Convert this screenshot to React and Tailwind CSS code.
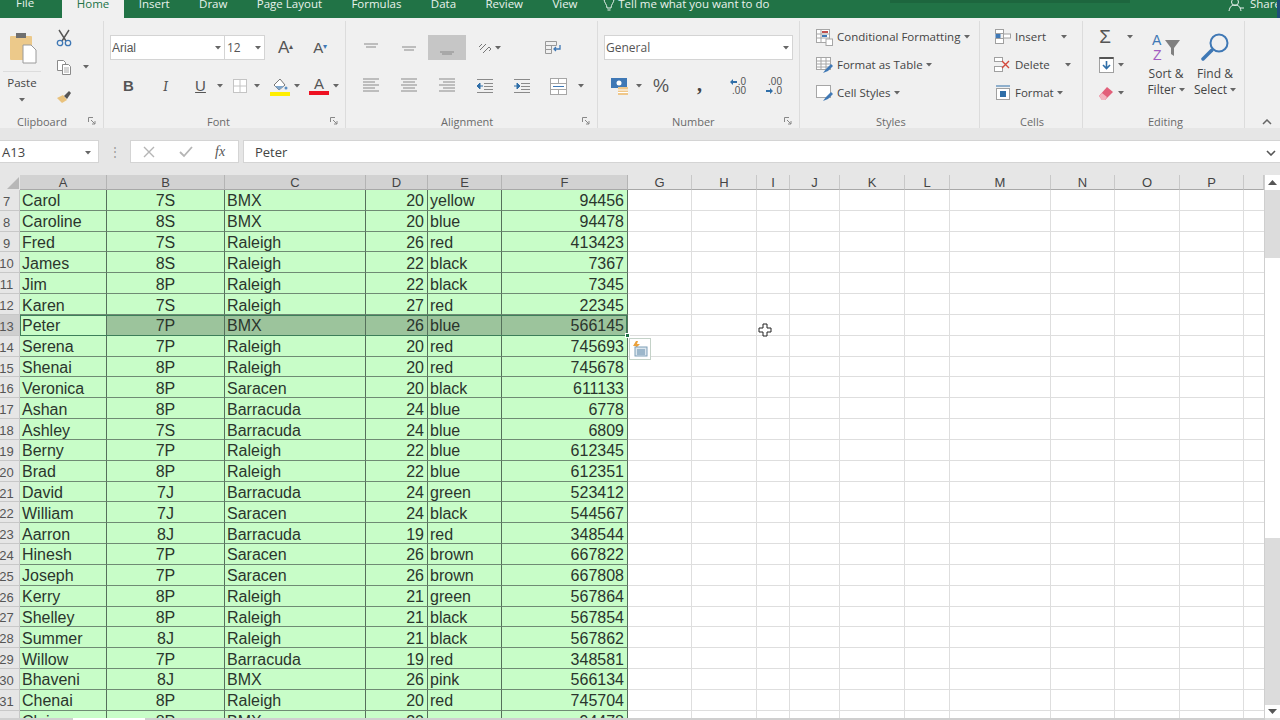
import React from 'react'

const ui = "font-['Open_Sans',sans-serif]"
const cols = 'grid grid-cols-[20px_87px_118px_141px_62px_74px_126px_64px_65px_33px_50px_65px_45px_101px_64px_65px_64px_20px]'

const letters = ['A', 'B', 'C', 'D', 'E', 'F', 'G', 'H', 'I', 'J', 'K', 'L', 'M', 'N', 'O', 'P', '']

const rows = [
  [7, 'Carol', '7S', 'BMX', 20, 'yellow', 94456],
  [8, 'Caroline', '8S', 'BMX', 20, 'blue', 94478],
  [9, 'Fred', '7S', 'Raleigh', 26, 'red', 413423],
  [10, 'James', '8S', 'Raleigh', 22, 'black', 7367],
  [11, 'Jim', '8P', 'Raleigh', 22, 'black', 7345],
  [12, 'Karen', '7S', 'Raleigh', 27, 'red', 22345],
  [13, 'Peter', '7P', 'BMX', 26, 'blue', 566145],
  [14, 'Serena', '7P', 'Raleigh', 20, 'red', 745693],
  [15, 'Shenai', '8P', 'Raleigh', 20, 'red', 745678],
  [16, 'Veronica', '8P', 'Saracen', 20, 'black', 611133],
  [17, 'Ashan', '8P', 'Barracuda', 24, 'blue', 6778],
  [18, 'Ashley', '7S', 'Barracuda', 24, 'blue', 6809],
  [19, 'Berny', '7P', 'Raleigh', 22, 'blue', 612345],
  [20, 'Brad', '8P', 'Raleigh', 22, 'blue', 612351],
  [21, 'David', '7J', 'Barracuda', 24, 'green', 523412],
  [22, 'William', '7J', 'Saracen', 24, 'black', 544567],
  [23, 'Aarron', '8J', 'Barracuda', 19, 'red', 348544],
  [24, 'Hinesh', '7P', 'Saracen', 26, 'brown', 667822],
  [25, 'Joseph', '7P', 'Saracen', 26, 'brown', 667808],
  [26, 'Kerry', '8P', 'Raleigh', 21, 'green', 567864],
  [27, 'Shelley', '8P', 'Raleigh', 21, 'black', 567854],
  [28, 'Summer', '8J', 'Raleigh', 21, 'black', 567862],
  [29, 'Willow', '7P', 'Barracuda', 19, 'red', 348581],
  [30, 'Bhaveni', '8J', 'BMX', 26, 'pink', 566134],
  [31, 'Chenai', '8P', 'Raleigh', 20, 'red', 745704],
  [32, 'Claire', '8P', 'BMX', 20, '', 94478],
]

const Caret = ({ className = '' }) => (
  <svg width="6" height="4" viewBox="0 0 6 4" className={className}><path d="M0 0h6L3 3.5z" fill="#666" /></svg>
)

const Launcher = () => (
  <svg width="8" height="8" viewBox="0 0 8 8" className="ml-auto mr-[7px]" fill="none" stroke="#888">
    <path d="M.5 5V.5H5" /><path d="M3 3l4 4M7 4v3H4" />
  </svg>
)

const Group = ({ w, label, labelMl, launcher, children }) => (
  <div className={`${w} shrink-0 flex flex-col border-r border-[#dcdcdc] mt-[3px]`}>
    <div className="flex-1 min-h-0">{children}</div>
    <div className="h-[14px] flex items-center">
      <span className={`${labelMl} text-[11px] leading-none text-[#6a6a6a]`}>{label}</span>
      {launcher && <Launcher />}
    </div>
  </div>
)

const Slot = ({ w = 'w-[37px]', children }) => (
  <div className={`${w} h-[26px] shrink-0 flex items-center justify-center`}>{children}</div>
)

const Lines = ({ y, w = 18 }) => (
  <svg width={w} height="18" viewBox="0 0 18 18" stroke="#8a8a8a">
    {y.map((p, i) => <path key={i} d={`M${p[0]} ${p[1]}H${p[2]}`} />)}
  </svg>
)

const Paste = () => (
  <svg width="30" height="32" viewBox="0 0 30 32" className="ml-[4px]">
    <rect x="1" y="4" width="22" height="24" rx="1" fill="#ecc98a" />
    <rect x="7" y="1" width="10" height="5" fill="#6f6f6f" />
    <path d="M14 13h8l5 5v13H14z" fill="#fff" stroke="#9a9a9a" />
  </svg>
)

const Scissors = () => (
  <svg width="16" height="18" viewBox="0 0 16 18" fill="none">
    <path d="M3 1l7 11M13 1L6 12" stroke="#555" strokeWidth="1.4" />
    <circle cx="4" cy="14" r="2.7" stroke="#3f78b5" strokeWidth="1.3" />
    <circle cx="12" cy="14" r="2.7" stroke="#3f78b5" strokeWidth="1.3" />
  </svg>
)

const Copy = () => (
  <svg width="16" height="16" viewBox="0 0 16 16" fill="#fff" stroke="#8a8a8a">
    <path d="M1.5 1.5h6l2 2v8h-8z" /><path d="M6.5 5.5h6l2 2v8h-8z" />
    <path d="M8 9h5M8 11h5M8 13h5" stroke="#aaa" />
  </svg>
)

const Painter = () => (
  <svg width="17" height="15" viewBox="0 0 17 15">
    <path d="M1 9l6-3 4 5-5 3z" fill="#e9c27d" />
    <path d="M8 7l5-5 2 2-4 6z" fill="#555" />
  </svg>
)

const Borders = () => (
  <svg width="16" height="16" viewBox="0 0 16 16" fill="#fff" stroke="#c4c4c4">
    <rect x="1.5" y="1.5" width="13" height="13" /><path d="M8 1.5v13M1.5 8h13" />
  </svg>
)

const Fill = () => (
  <svg width="20" height="19" viewBox="0 0 20 19">
    <path d="M4 8l6-6 5 6-6 5z" fill="#fff" stroke="#777" />
    <path d="M5 9h9l-5 4z" fill="#7fa6cc" />
    <circle cx="16" cy="11" r="1.5" fill="#5a8fc4" />
    <rect x="0" y="15" width="20" height="4" fill="#ffee00" />
  </svg>
)

const Orient = () => (
  <svg width="14" height="14" viewBox="0 0 14 14" fill="none" stroke="#777">
    <path d="M2 9l6-6M1 6l3-3M5 12l6-6M11 6l2 2-2 2" />
  </svg>
)

const Wrap = () => (
  <svg width="18" height="16" viewBox="0 0 18 16" fill="none">
    <path d="M1.5 1.5h11v4h-11zM1.5 5.5h6v4h-6zM1.5 9.5h6v4h-6z" stroke="#999" />
    <path d="M16 5v4h-6M12 7l-2 2 2 2" stroke="#3f78b5" strokeWidth="1.3" />
  </svg>
)

const Indent = ({ flip }) => (
  <svg width="16" height="14" viewBox="0 0 16 14" fill="none">
    <path d="M0 .5h16M7 4.5h9M7 7.5h9M7 10.5h9M0 13.5h16" stroke="#8a8a8a" />
    <path d={flip ? 'M0 7h4M3 4l3 3-3 3z' : 'M6 7H2M3 4L0 7l3 3z'} stroke="#2f6ea8" fill="#2f6ea8" />
  </svg>
)

const Merge = () => (
  <svg width="17" height="17" viewBox="0 0 17 17" fill="#fff" stroke="#a6a6a6">
    <rect x=".5" y=".5" width="16" height="16" /><path d="M.5 5.5h16M.5 11.5h16M8.5.5v5M8.5 11.5v5" />
    <path d="M3 8.5h11" stroke="#3f78b5" />
  </svg>
)

const Money = () => (
  <svg width="18" height="18" viewBox="0 0 18 18">
    <rect x="0" y="1" width="16" height="10" fill="#3f78b5" />
    <circle cx="8" cy="6" r="2.5" fill="#fff" />
    <rect x="7" y="10" width="10" height="8" fill="#efc78a" />
    <path d="M7 13h10M7 15.500h10" stroke="#fff" />
  </svg>
)

const DecArrow = ({ left }) => (
  <svg width="7" height="6" viewBox="0 0 7 6" className="mr-[1px]">
    <path d={left ? 'M0 3l3-3v2h4v2H3v2z' : 'M7 3L4 0v2H0v2h4v2z'} fill="#2f6ea8" />
  </svg>
)

const Decimal = ({ a, b, up }) => (
  <div className="flex flex-col items-end text-[10px] leading-[9px] text-[#555] font-['Liberation_Sans',sans-serif]">
    <span className="flex items-center">{up && <DecArrow left />}{a}</span>
    <span className="flex items-center">{!up && <DecArrow />}{b}</span>
  </div>
)

const CondFmt = () => (
  <svg width="17" height="17" viewBox="0 0 17 17" fill="#fff" stroke="#a6a6a6">
    <rect x=".5" y=".5" width="13" height="13" /><path d="M.5 5h13M.5 9h13M5 .5v13" />
    <rect x="6" y="2" width="6" height="2" fill="#c0504d" stroke="none" />
    <rect x="6" y="6" width="5" height="2" fill="#3f78b5" stroke="none" />
    <rect x="10" y="10" width="6.500" height="6.500" />
  </svg>
)

const FmtTable = () => (
  <svg width="17" height="17" viewBox="0 0 17 17" fill="#fff" stroke="#a6a6a6">
    <rect x=".5" y=".5" width="14" height="12" />
    <path d="M.5 4h14M.5 7h14M.5 10h14M5 .5v12M10 .5v12" />
    <path d="M7 16l3-4 5-5 2 2-5 5z" fill="#3f78b5" stroke="none" />
  </svg>
)

const CellSt = () => (
  <svg width="17" height="17" viewBox="0 0 17 17" fill="#fff" stroke="#a6a6a6">
    <rect x=".5" y=".5" width="14" height="12" />
    <path d="M7 16l3-4 5-5 2 2-5 5z" fill="#3f78b5" stroke="none" />
  </svg>
)

const InsertI = () => (
  <svg width="16" height="16" viewBox="0 0 16 16" fill="#fff" stroke="#a0a0a0">
    <rect x=".5" y=".5" width="8" height="4" /><rect x="8.500" y="5" width="7" height="4" />
    <rect x=".5" y="9.500" width="8" height="5" /><rect x=".5" y="5" width="5" height="4" fill="#3f78b5" stroke="none" />
  </svg>
)

const DeleteI = () => (
  <svg width="17" height="16" viewBox="0 0 17 16" fill="#fff" stroke="#a0a0a0">
    <rect x=".5" y=".5" width="8" height="4" /><rect x=".5" y="9.500" width="8" height="5" />
    <path d="M8 4l7 7M15 4l-7 7" stroke="#d4483b" strokeWidth="1.4" fill="none" />
  </svg>
)

const FormatI = () => (
  <svg width="16" height="17" viewBox="0 0 16 17" fill="#fff" stroke="#a0a0a0">
    <rect x="1.500" y="3.500" width="13" height="11" />
    <rect x="5" y="6" width="6" height="6" fill="#2f6ea8" stroke="none" />
    <path d="M1 1h14" stroke="#2f6ea8" />
  </svg>
)

const FillDown = () => (
  <svg width="15" height="16" viewBox="0 0 15 16" fill="#fff">
    <rect x=".5" y=".5" width="14" height="15" stroke="#a0a0a0" />
    <path d="M.5 1h14" stroke="#555" strokeWidth="2" />
    <path d="M7.500 4v7M4 8l3.500 3.500L11 8" stroke="#2f6ea8" strokeWidth="1.6" fill="none" />
  </svg>
)

const Eraser = () => (
  <svg width="14" height="13" viewBox="0 0 14 13"><path d="M0 9l8-9 6 5-8 8H3z" fill="#e2607a" /><path d="M0 9l3-3 5 4-2 3H3z" fill="#f3b6c1" /></svg>
)

const SortF = () => (
  <svg width="30" height="28" viewBox="0 0 30 28">
    <path d="M14 7h15l-6 8v8l-3-2v-6z" fill="#808080" />
    <text x="1" y="12" fontSize="14" fill="#3f78b5" fontFamily="Liberation Sans">A</text>
    <text x="2" y="27" fontSize="14" fill="#a25cc0" fontFamily="Liberation Sans">Z</text>
  </svg>
)

const Search = () => (
  <svg width="29" height="28" viewBox="0 0 29 28" fill="none" stroke="#3f78b5">
    <circle cx="18" cy="10" r="8.500" strokeWidth="2" />
    <path d="M11 17L2 26" strokeWidth="3.500" strokeLinecap="round" />
  </svg>
)

const CmdRow = ({ icon, label, caretCls }) => (
  <div className="h-[28px] flex items-center">
    <div className="w-[21px] shrink-0 flex justify-center">{icon}</div>
    <span className="text-[11.5px] leading-none text-[#444] ml-[2px] whitespace-nowrap">{label}</span>
    <Caret className={caretCls} />
  </div>
)

const Ribbon = () => (
  <div className={`${ui} h-[110px] bg-[#f0f0f0] flex`}>
    <Group w="w-[104px]" label="Clipboard" labelMl="ml-[17px]" launcher>
      <div className="flex h-full">
        <div className="w-[44px] flex flex-col items-center pt-[11px]">
          <Paste />
          <div className="w-[38px] border-t border-[#dcdcdc] mt-[7px]" />
          <span className="text-[11.5px] leading-none text-[#444] mt-[5px]">Paste</span>
          <Caret className="mt-[9px]" />
        </div>
        <div className="flex flex-col pt-[4px] ml-[11px]">
          <Slot w="w-[18px]"><Scissors /></Slot>
          <div className="flex items-center mt-[3px]">
            <Slot w="w-[18px]"><Copy /></Slot><Caret className="ml-[10px]" />
          </div>
          <div className="mt-[3px]"><Slot w="w-[18px]"><Painter /></Slot></div>
        </div>
      </div>
    </Group>

    <Group w="w-[242px]" label="Font" labelMl="ml-[103px]" launcher>
      <div className="pt-[14px] pl-[6px]">
        <div className="flex items-center">
          <div className="w-[115px] h-[25px] bg-white border border-[#d4d4d4] flex items-center pl-[1px] pr-[3px] text-[12px] text-[#555] font-['Liberation_Sans',sans-serif]">
            Arial<Caret className="ml-auto" />
          </div>
          <div className="w-[40px] h-[25px] bg-white border border-l-0 border-[#d4d4d4] flex items-center pl-[2px] pr-[3px] text-[12px] text-[#555]">
            12<Caret className="ml-auto" />
          </div>
          <span className="ml-[13px] text-[17px] leading-none text-[#555] font-['Liberation_Sans',sans-serif]">A<sup className="text-[8px] text-[#555]">▴</sup></span>
          <span className="ml-[20px] text-[15px] leading-none text-[#555] font-['Liberation_Sans',sans-serif]">A<sup className="text-[8px] text-[#3f78b5]">▾</sup></span>
        </div>
        <div className="flex items-center mt-[13px] font-['Liberation_Sans',sans-serif] text-[#555]">
          <Slot><span className="text-[15px] font-bold">B</span></Slot>
          <Slot><span className="text-[15px] italic font-serif">I</span></Slot>
          <Slot w="w-[33px]"><span className="text-[15px] underline">U</span></Slot>
          <Caret className="mr-[8px]" />
          <Slot w="w-[18px]"><Borders /></Slot>
          <Caret className="ml-[5px] mr-[10px]" />
          <Slot w="w-[20px]"><Fill /></Slot>
          <Caret className="ml-[4px] mr-[9px]" />
          <Slot w="w-[20px]">
            <div className="flex flex-col items-center">
              <span className="text-[15px] leading-[14px]">A</span>
              <div className="w-[20px] h-[4px] bg-[#ee1122]" />
            </div>
          </Slot>
          <Caret className="ml-[4px]" />
        </div>
      </div>
    </Group>

    <Group w="w-[252px]" label="Alignment" labelMl="ml-[95px]" launcher>
      <div className="pt-[14px] pl-[6px]">
        <div className="flex items-center h-[25px]">
          <div className="w-[38px] flex justify-center"><Lines y={[[2, 5, 16], [4, 8, 14]]} /></div>
          <div className="w-[38px] flex justify-center"><Lines y={[[2, 8, 16], [4, 11, 14]]} /></div>
          <div className="w-[38px] h-[25px] bg-[#c6c6c6] flex justify-center items-center"><Lines y={[[2, 13, 16], [4, 15, 14]]} /></div>
          <div className="ml-[12px]"><Orient /></div>
          <Caret className="ml-[3px]" />
          <div className="ml-[43px]"><Wrap /></div>
        </div>
        <div className="flex items-center mt-[13px]">
          <Slot w="w-[38px]"><Lines y={[[1, 2, 17], [1, 5, 13], [1, 8, 17], [1, 11, 13], [1, 14, 17]]} /></Slot>
          <Slot w="w-[38px]"><Lines y={[[1, 2, 17], [3, 5, 15], [1, 8, 17], [3, 11, 15], [1, 14, 17]]} /></Slot>
          <Slot w="w-[38px]"><Lines y={[[1, 2, 17], [5, 5, 17], [1, 8, 17], [5, 11, 17], [1, 14, 17]]} /></Slot>
          <Slot><Indent /></Slot>
          <Slot><Indent flip /></Slot>
          <Slot w="w-[36px]"><Merge /></Slot>
          <Caret className="ml-[2px]" />
        </div>
      </div>
    </Group>

    <Group w="w-[202px]" label="Number" labelMl="ml-[74px]" launcher>
      <div className="pt-[14px] pl-[6px]">
        <div className="w-[189px] h-[25px] bg-white border border-[#d4d4d4] flex items-center pl-[1px] pr-[3px] text-[12px] text-[#555]">
          General<Caret className="ml-auto" />
        </div>
        <div className="flex items-center mt-[13px] h-[26px]">
          <Slot w="w-[32px]"><Money /></Slot>
          <Caret className="mr-[11px]" />
          <span className="w-[18px] text-[18px] leading-none text-[#555] font-['Liberation_Sans',sans-serif]">%</span>
          <span className="ml-[26px] w-[12px] -mt-[5px] text-[20px] font-bold leading-none text-[#444] font-['Liberation_Serif',serif]">,</span>
          <div className="ml-[15px] w-[22px]"><Decimal a=".0" b=".00" up /></div>
          <div className="ml-[14px] w-[22px]"><Decimal a=".00" b=".0" /></div>
        </div>
      </div>
    </Group>

    <Group w="w-[180px]" label="Styles" labelMl="ml-[76px]">
      <div className="pt-[2px] pl-[14px]">
        <CmdRow icon={<CondFmt />} label="Conditional Formatting" caretCls="ml-[4px]" />
        <CmdRow icon={<FmtTable />} label="Format as Table" caretCls="ml-[3px]" />
        <CmdRow icon={<CellSt />} label="Cell Styles" caretCls="ml-[3px]" />
      </div>
    </Group>

    <Group w="w-[103px]" label="Cells" labelMl="ml-[40px]">
      <div className="pt-[2px] pl-[12px]">
        <CmdRow icon={<InsertI />} label="Insert" caretCls="ml-[15px]" />
        <CmdRow icon={<DeleteI />} label="Delete" caretCls="ml-[15px]" />
        <CmdRow icon={<FormatI />} label="Format" caretCls="ml-[3px]" />
      </div>
    </Group>

    <Group w="w-[162px]" label="Editing" labelMl="ml-[65px]">
      <div className="flex pl-[13px] pt-[2px]">
        <div className="w-[50px]">
          <div className="h-[28px] flex items-center">
            <span className="w-[18px] text-center text-[19px] leading-none text-[#555] -mt-[2px] font-['Liberation_Sans',sans-serif]">Σ</span>
            <Caret className="ml-[13px]" />
          </div>
          <div className="h-[28px] flex items-center"><div className="w-[20px] flex justify-center"><FillDown /></div><Caret className="ml-[2px]" /></div>
          <div className="h-[28px] flex items-center"><div className="w-[20px] flex justify-center"><Eraser /></div><Caret className="ml-[2px]" /></div>
        </div>
        <div className="w-[50px] ml-[-5px] flex flex-col items-center pt-[10px]">
          <SortF />
          <span className="text-[12px] leading-[16px] text-[#444] mt-[5px] whitespace-nowrap">Sort &amp;</span>
          <span className="text-[12px] leading-[16px] text-[#444] flex items-center whitespace-nowrap">Filter<Caret className="ml-[3px]" /></span>
        </div>
        <div className="w-[50px] ml-[-1px] flex flex-col items-center pt-[10px]">
          <Search />
          <span className="text-[12px] leading-[16px] text-[#444] mt-[5px] whitespace-nowrap">Find &amp;</span>
          <span className="text-[12px] leading-[16px] text-[#444] flex items-center whitespace-nowrap">Select<Caret className="ml-[3px]" /></span>
        </div>
      </div>
    </Group>

    <div className="flex-1 flex items-end justify-end pr-[8px] pb-[3px]">
      <svg width="10" height="6" viewBox="0 0 10 6" fill="none" stroke="#666" strokeWidth="1.5"><path d="M1 5l4-4 4 4" /></svg>
    </div>
  </div>
)

const TopBar = () => {
  const tabs = ['Insert', 'Draw', 'Page Layout', 'Formulas', 'Data', 'Review', 'View']
  return (
    <div className={`${ui} relative h-[18px] bg-[#217346] flex overflow-hidden text-[11.5px] text-[#e8f2ec]`}>
      <div className="ml-[1px] w-[48px] pl-[15px] mr-[13px]"><div className="-mt-[5px] leading-4">File</div></div>
      <div className="w-[62px] bg-[#f0f0f0] text-[#217346] text-center"><div className="-mt-1 leading-4">Home</div></div>
      {tabs.map((t) => (
        <div key={t} className="px-[14.7px]"><div className="-mt-1 leading-4 whitespace-nowrap">{t}</div></div>
      ))}
      <div className="ml-[11px] flex items-start">
        <svg width="12" height="12" viewBox="0 0 12 12" fill="none" stroke="#e8f2ec" className="-mt-[1px]"><path d="M1 0c0 4 3 5 3 9h4c0-4 3-5 3-9" /><path d="M4.500 11h3" /></svg>
        <div className="-mt-1 leading-4 ml-[3px] whitespace-nowrap">Tell me what you want to do</div>
      </div>
      <div className="ml-auto flex items-start">
        <svg width="16" height="14" viewBox="0 0 16 14" fill="none" stroke="#e8f2ec" className="-mt-[2px]"><circle cx="7" cy="4" r="3.500" /><path d="M1 13c1-5 3-6 6-6s5 1 6 6M12 10h4" /></svg>
        <div className="-mt-1 leading-4 ml-[6px] w-[30px] whitespace-nowrap">Share</div>
      </div>
      <div className="absolute left-[890px] top-0 w-[240px] h-[3px] bg-[#1d663e]" />
      <div className="absolute right-0 top-0 w-[3px] h-[18px] bg-[#1f4e79]" />
    </div>
  )
}

const FormulaBar = () => (
  <div className={`${ui} h-[47px] bg-[#e6e6e6] pt-[12px]`}>
    <div className="h-[23px] flex">
      <div className="w-[99px] bg-white border-y border-r border-[#d4d4d4] flex items-center pt-[2px] pl-[2px] pr-[7px] text-[13px] text-[#444]">
        A13<Caret className="ml-auto" />
      </div>
      <div className="w-[31px] flex justify-center items-center text-[#999] text-[12px] tracking-tighter">⋮</div>
      <div className="w-[109px] bg-white border border-[#d4d4d4] flex items-center">
        <svg width="12" height="12" viewBox="0 0 12 12" className="ml-[12px]" stroke="#b5b5b5" strokeWidth="1.4"><path d="M1 1l10 10M11 1L1 11" /></svg>
        <svg width="14" height="12" viewBox="0 0 14 12" className="ml-[24px]" fill="none" stroke="#b5b5b5" strokeWidth="1.8"><path d="M1 6l4 4 8-9" /></svg>
        <span className="ml-[22px] text-[14px] italic text-[#555] font-['Liberation_Serif',serif]">fx</span>
      </div>
      <div className="flex-1 ml-[4px] bg-white border-y border-l border-[#d4d4d4] flex items-center pt-[2px] pl-[11px] pr-[4px] text-[13px] text-[#444]">
        Peter
        <svg width="10" height="6" viewBox="0 0 10 6" className="ml-auto" fill="none" stroke="#555" strokeWidth="1.6"><path d="M1 1l4 4 4-4" /></svg>
      </div>
    </div>
  </div>
)

const HeaderRow = () => (
  <div className={`${cols} h-[15px] font-['Liberation_Sans',sans-serif] text-[13px] leading-none`}>
    <div className="bg-[#e6e6e6] flex items-end justify-end pr-[1px] pb-[1px]">
      <div className="w-0 h-0 border-l-[12px] border-l-transparent border-b-[12px] border-b-[#b8b8b8]" />
    </div>
    {letters.map((l, i) => (
      <div
        key={i}
        className={`flex items-center justify-center text-[#444] border-r ${i < 6 ? 'bg-[#d2d2d2] border-[#b4b4b4]' : 'bg-[#e6e6e6] border-[#c8c8c8]'} border-b border-b-[#a8a8a8]`}
      >
        {l}
      </div>
    ))}
  </div>
)

const SheetRow = ({ row }) => {
  const [n, name, code, brand, size, colour, num] = row
  const sel = n === 13
  const dark = sel ? 'bg-[#9cc49c]' : 'bg-[#c8fdc8]'
  const line = 'pt-[3px] border-r border-b border-r-[#55705b] border-b-[#6f8b74]'
  const empties = Array.from({ length: 11 })
  return (
    <div className={`${cols} h-[20.83px] text-[16px] leading-none text-[#2b352d] font-['Liberation_Sans',sans-serif]`}>
      <div className={`flex items-center justify-center pt-[3px] pr-[6px] text-[13px] text-[#555] border-b border-r border-[#c8c8c8] ${sel ? 'bg-[#cfcfcf]' : 'bg-[#e6e6e6]'}`}>{n}</div>
      <div className={`flex items-center pl-[2px] bg-[#c8fdc8] ${line}`}>{name}</div>
      <div className={`flex items-center justify-center ${dark} ${line}`}>{code}</div>
      <div className={`flex items-center pl-[2px] ${dark} ${line}`}>{brand}</div>
      <div className={`flex items-center justify-end pr-[3px] ${dark} ${line}`}>{size}</div>
      <div className={`flex items-center pl-[2px] ${dark} ${line}`}>{colour}</div>
      <div className={`flex items-center justify-end pr-[3px] ${dark} ${line}`}>{num}</div>
      {empties.map((_, i) => (
        <div key={i} className={`bg-white border-b border-[#dedede] ${i < 10 ? 'border-r' : ''}`} />
      ))}
    </div>
  )
}

const Sheet = () => (
  <div className="relative h-[545px] flex overflow-hidden">
    <div className="w-[1264px] shrink-0">
      <HeaderRow />
      {rows.map((r) => <SheetRow key={r[0]} row={r} />)}
    </div>
    <div className="flex-1 flex flex-col bg-[#dcdcdc] border-l border-[#cfcfcf]">
      <div className="h-[15px] bg-white flex items-center justify-center">
        <svg width="9" height="5" viewBox="0 0 9 5"><path d="M0 5l4.500-5L9 5z" fill="#555" /></svg>
      </div>
      <div className="mt-[68px] h-[280px] bg-white" />
      <div className="mt-auto mb-[2px] h-[13px] bg-white flex items-center justify-center">
        <svg width="9" height="5" viewBox="0 0 9 5"><path d="M0 0l4.500 5L9 0z" fill="#555" /></svg>
      </div>
    </div>

    {/* selection outline, handle, quick analysis button, cursor */}
    <div className="absolute left-[20px] top-[140px] w-[607px] h-[21px] border border-[#3d7f5a]" />
    <div className="absolute left-[625px] top-[158px] w-[5px] h-[5px] bg-[#217346] border border-white" />
    <div className="absolute left-[629px] top-[163px] w-[22px] h-[22px] bg-white border border-[#c4d2c8] flex items-center justify-center">
      <svg width="16" height="16" viewBox="0 0 16 16">
        <path d="M4 0L1 5h3L3 8l5-5H5l1-3z" fill="#eba13c" />
        <rect x="3" y="6" width="12" height="9" fill="#dbe6ee" stroke="#7f9fb8" />
        <path d="M5 9h8M5 11h8M5 13h8" stroke="#5f88a8" />
      </svg>
    </div>
    <svg width="14" height="14" viewBox="0 0 14 14" className="absolute left-[758px] top-[148px]">
      <path d="M5 1h4v4h4v4H9v4H5V9H1V5h4z" fill="#fff" stroke="#222" />
    </svg>
    <div className="absolute left-0 bottom-0 w-[1264px] h-[2px] bg-[#cfcfcf]" />
    <div className="absolute left-[73px] bottom-0 w-[72px] h-[2px] bg-white" />
  </div>
)

export default function App() {
  return (
    <div className="w-[1280px] h-[720px] overflow-hidden bg-white">
      <TopBar />
      <Ribbon />
      <FormulaBar />
      <Sheet />
    </div>
  )
}
